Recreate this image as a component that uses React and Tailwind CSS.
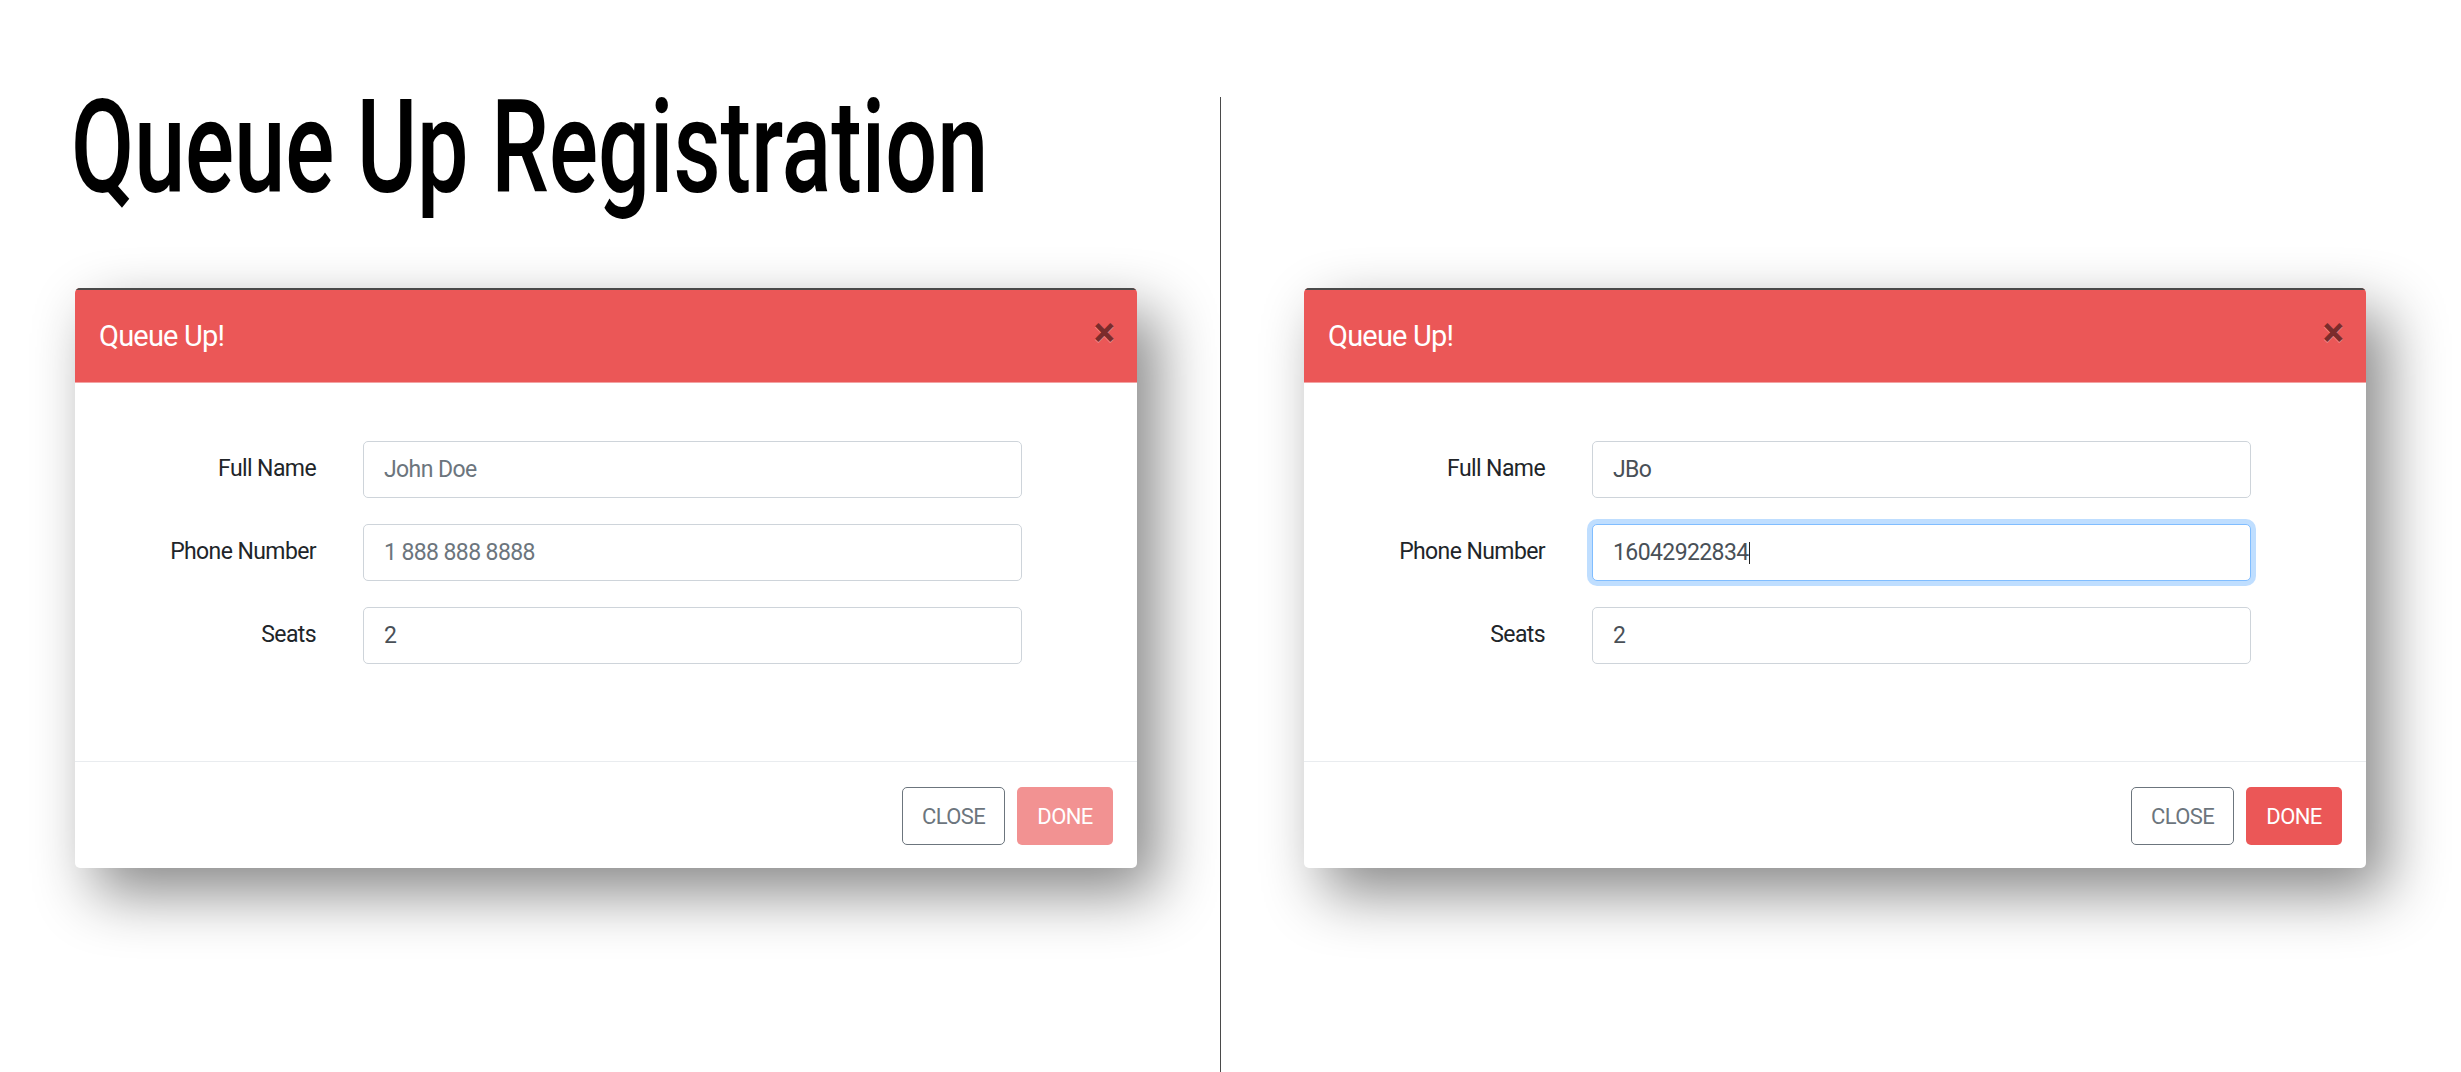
import React from "react";

function Field({ label, value, placeholder, focused }) {
  return (
    <div className="flex items-center h-[57px]">
      <label className="w-[241px] text-right text-[23px] tracking-[-0.6px] text-[#212529]">
        {label}
      </label>
      <div className="relative ml-[47px] w-[659px] h-[57px]">
        <input
          readOnly
          value={value}
          placeholder={placeholder}
          className={
            focused
              ? "w-full h-full rounded-[5px] bg-white border border-[#80bdff] shadow-[0_0_0_5px_rgba(0,123,255,0.25)] px-[20px] text-[23px] tracking-[-0.6px] text-[#495057] outline-none placeholder:text-[#6c757d]"
              : "w-full h-full rounded-[5px] bg-white border border-[#ced4da] px-[20px] text-[23px] tracking-[-0.6px] text-[#495057] outline-none placeholder:text-[#6c757d]"
          }
        />
        {focused ? (
          <div className="absolute left-[21px] top-0 h-full flex items-center text-[23px] tracking-[-0.6px] pointer-events-none">
            <span className="invisible">{value}</span>
            <span className="inline-block h-[22px] w-px bg-[#222]" />
          </div>
        ) : null}
      </div>
    </div>
  );
}

function Modal({ name, phone, focused, doneActive }) {
  return (
    <div className="w-[1062px] rounded-[5px] bg-white shadow-[20px_25px_60px_rgba(0,0,0,0.47)] overflow-hidden font-['Roboto',sans-serif]">
      <div className="h-[95px] bg-[#eb5757] border-t-2 border-t-[#4a4a4a] border-b border-b-[#f3a3a3] flex items-center justify-between pl-[24px] pr-[22px]">
        <h5 className="text-white text-[29px] tracking-[-0.8px] leading-none">Queue Up!</h5>
        <span className="text-[40px] font-bold leading-none text-[#7a2c2c] [text-shadow:0_1px_0_rgba(255,255,255,0.35)] -mt-[6px]">
          ×
        </span>
      </div>
      <div className="h-[378px] pt-[58px] flex flex-col gap-[26px]">
        <Field label="Full Name" value={name} placeholder="John Doe" />
        <Field label="Phone Number" value={phone} placeholder="1 888 888 8888" focused={focused} />
        <Field label="Seats" value="2" placeholder="" />
      </div>
      <div className="border-t border-t-[#e9ecef] pt-[25px] pb-[23px] pr-[24px] flex justify-end gap-[12px]">
        <button className="w-[103px] h-[58px] rounded-[5px] border border-[#6c757d] bg-white text-[#6c757d] text-[22px] tracking-[-0.6px]">
          CLOSE
        </button>
        <button
          className={
            doneActive
              ? "w-[96px] h-[58px] rounded-[5px] bg-[#eb5757] text-white text-[22px] tracking-[-0.6px]"
              : "w-[96px] h-[58px] rounded-[5px] bg-[#f29292] text-white text-[22px] tracking-[-0.6px]"
          }
        >
          DONE
        </button>
      </div>
    </div>
  );
}

export default function App() {
  return (
    <div className="w-[2461px] h-[1072px] bg-white flex overflow-hidden font-['Roboto',sans-serif]">
      <div className="w-[1220px] shrink-0 pl-[75px]">
        <h1 className="mt-[83px] h-[130px] text-[130px] leading-none font-medium text-black whitespace-nowrap origin-left scale-x-[0.705] -ml-[4px]">
          Queue Up Registration
        </h1>
        <div className="mt-[75px]">
          <Modal name="" phone="" />
        </div>
      </div>
      <div className="w-px shrink-0 mt-[97px] bg-[#4a4a4a]" />
      <div className="pl-[83px] pt-[288px]">
        <Modal name="JBo" phone="16042922834" focused doneActive />
      </div>
    </div>
  );
}
